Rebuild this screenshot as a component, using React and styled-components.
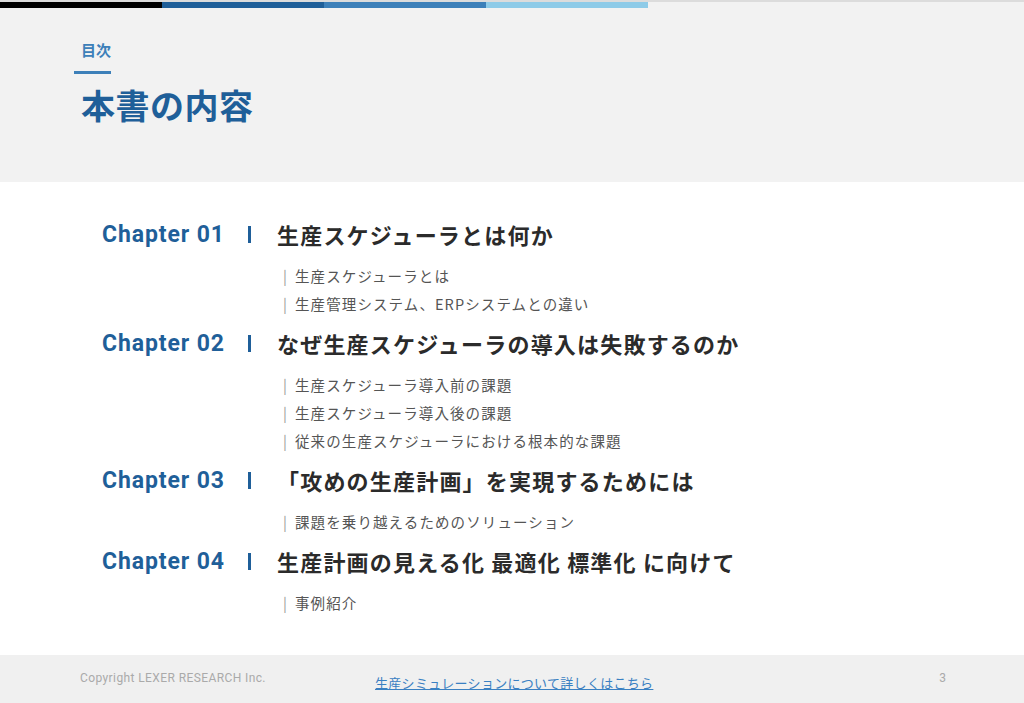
import React from "react";
import styled, { createGlobalStyle } from "styled-components";

const Global = createGlobalStyle`
  html, body { margin: 0; padding: 0; background: #fff; }
  body { font-family: "Noto Sans CJK JP", "Noto Sans", sans-serif; }
`;

const Page = styled.div`
  width: 1024px;
  height: 703px;
  display: flex;
  flex-direction: column;
  overflow: hidden;
`;

const TopStrip = styled.div`
  height: 8px;
  display: flex;
  background: #f2f2f2;
  border-top: 2px solid #dcdcdc;
  box-sizing: border-box;
`;

const Seg = styled.div`
  width: 162px;
  background: ${(p) => p.color};
`;

const Header = styled.header`
  height: 174px;
  background: #f2f2f2;
  padding: 30px 0 0 81px;
  box-sizing: border-box;
`;

const Kicker = styled.div`
  font-size: 15px;
  font-weight: 700;
  color: #3d80b9;
  line-height: 24px;
`;

const Rule = styled.div`
  width: 37px;
  height: 3px;
  background: #3d80b9;
  margin: 9px 0 0 -7px;
`;

const Title = styled.h1`
  margin: 8px 0 0;
  font-size: 34px;
  font-weight: 700;
  color: #1f5f99;
  line-height: 46px;
  letter-spacing: 0.5px;
`;

const Content = styled.main`
  flex: 1;
  padding: 36px 0 0 102px;
`;

const Chapter = styled.section`
  & + & { margin-top: 9px; }
`;

const ChapterRow = styled.div`
  display: grid;
  grid-template-columns: 146px 29px 1fr;
  align-items: center;
  height: 30px;
`;

const Label = styled.div`
  font-family: Roboto, "Noto Sans", sans-serif;
  font-size: 23px;
  font-weight: 700;
  color: #1f5f99;
  letter-spacing: 0.9px;
`;

const Bar = styled.div`
  width: 3px;
  height: 17px;
  background: #1f5f99;
`;

const ChapterTitle = styled.div`
  font-size: 22px;
  font-weight: 700;
  color: #2b2b2b;
  letter-spacing: 1.2px;
`;

const SubList = styled.ul`
  list-style: none;
  margin: 14px 0 0;
  padding: 0 0 0 181px;
`;

const Sub = styled.li`
  height: 28px;
  line-height: 28px;
  font-size: 14.5px;
  color: #555;
  letter-spacing: 1.1px;
  &::before {
    content: "|";
    color: #999;
    margin-right: 7px;
  }
`;

const Footer = styled.footer`
  height: 48px;
  background: #f0f0f0;
  display: flex;
  align-items: flex-start;
  padding: 0 78px 0 80px;
  box-sizing: border-box;
`;

const Copy = styled.div`
  font-family: Roboto, sans-serif;
  font-size: 12px;
  color: #aaa;
  padding-top: 16px;
  width: 295px;
  letter-spacing: 0.4px;
`;

const Link = styled.a`
  font-size: 13px;
  color: #3a80c2;
  text-decoration: underline;
  padding-top: 18px;
  flex: 1;
  letter-spacing: 0.3px;
`;

const Num = styled.div`
  font-family: Roboto, sans-serif;
  font-size: 12px;
  color: #aaa;
  padding-top: 16px;
`;

const chapters = [
  { n: "01", t: "生産スケジューラとは何か", s: ["生産スケジューラとは", "生産管理システム、ERPシステムとの違い"] },
  { n: "02", t: "なぜ生産スケジューラの導入は失敗するのか", s: ["生産スケジューラ導入前の課題", "生産スケジューラ導入後の課題", "従来の生産スケジューラにおける根本的な課題"] },
  { n: "03", t: "「攻めの生産計画」を実現するためには", s: ["課題を乗り越えるためのソリューション"] },
  { n: "04", t: "生産計画の見える化 最適化 標準化 に向けて", s: ["事例紹介"] },
];

export default function App() {
  return (
    <Page>
      <Global />
      <TopStrip>
        <Seg color="#000" />
        <Seg color="#1f5f99" />
        <Seg color="#3d80b9" />
        <Seg color="#8ecbe8" />
      </TopStrip>
      <Header>
        <Kicker>目次</Kicker>
        <Rule />
        <Title>本書の内容</Title>
      </Header>
      <Content>
        {chapters.map((c) => (
          <Chapter key={c.n}>
            <ChapterRow>
              <Label>Chapter {c.n}</Label>
              <Bar />
              <ChapterTitle>{c.t}</ChapterTitle>
            </ChapterRow>
            <SubList>
              {c.s.map((s) => (
                <Sub key={s}>{s}</Sub>
              ))}
            </SubList>
          </Chapter>
        ))}
      </Content>
      <Footer>
        <Copy>Copyright LEXER RESEARCH Inc.</Copy>
        <Link href="#">生産シミュレーションについて詳しくはこちら</Link>
        <Num>3</Num>
      </Footer>
    </Page>
  );
}
